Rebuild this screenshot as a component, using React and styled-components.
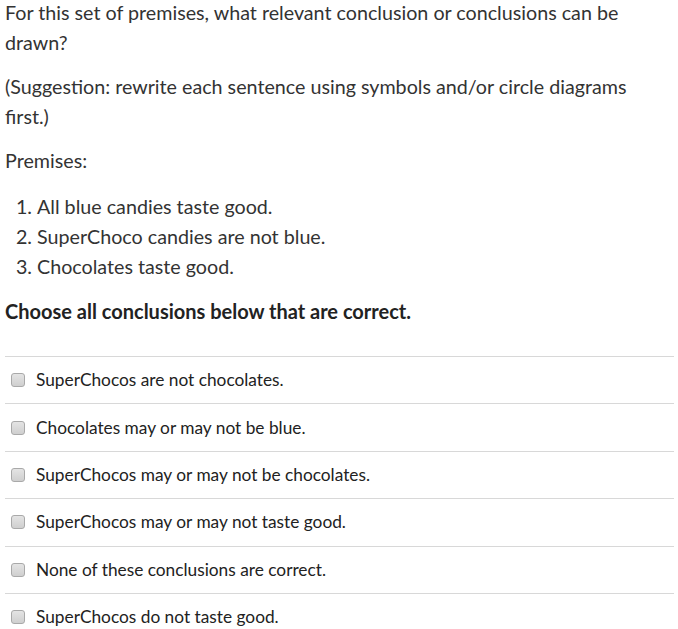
import React from "react";
import styled, { createGlobalStyle } from "styled-components";

const Global = createGlobalStyle`
  body {
    margin: 0;
    background: #fff;
    font-family: Lato, "Open Sans", sans-serif;
    color: #333;
  }
`;

const Page = styled.div`
  width: 678px;
  margin-top: -2px;
  padding: 0 4px 0 5px;
  box-sizing: border-box;
  font-size: 19.7px;
  line-height: 30px;
`;

const Para = styled.p`
  margin: 0 0 14px;
  max-width: 650px;
`;

const List = styled.ol`
  margin: 16px 0 14px;
  padding-left: 32px;
  li::marker {
    content: counter(list-item) ". ";
  }
`;

const Heading = styled.p`
  margin: 0 0 30px;
  font-size: 20px;
  font-weight: 700;
  color: #222;
`;

const Options = styled.div`
  display: flex;
  flex-direction: column;
`;

const Option = styled.label`
  display: flex;
  align-items: center;
  gap: 11px;
  height: 46.4px;
  padding-left: 6px;
  border-top: 1px solid #d8d8d8;
  font-size: 17.3px;
  color: #222;
`;

const Box = styled.span`
  width: 12px;
  height: 12px;
  border: 1px solid #a9a9a9;
  border-radius: 3px;
  background: linear-gradient(#e4e4e4, #cfcfcf);
  flex: none;
`;

const premises = [
  "All blue candies taste good.",
  "SuperChoco candies are not blue.",
  "Chocolates taste good.",
];

const options = [
  "SuperChocos are not chocolates.",
  "Chocolates may or may not be blue.",
  "SuperChocos may or may not be chocolates.",
  "SuperChocos may or may not taste good.",
  "None of these conclusions are correct.",
  "SuperChocos do not taste good.",
];

export default function App() {
  return (
    <Page>
      <Global />
      <Para>
        For this set of premises, what relevant conclusion or conclusions can be
        drawn?
      </Para>
      <Para>
        (Suggestion: rewrite each sentence using symbols and/or circle diagrams
        first.)
      </Para>
      <Para>Premises:</Para>
      <List>
        {premises.map((p) => (
          <li key={p}>{p}</li>
        ))}
      </List>
      <Heading>Choose all conclusions below that are correct.</Heading>
      <Options>
        {options.map((o) => (
          <Option key={o}>
            <Box />
            {o}
          </Option>
        ))}
      </Options>
    </Page>
  );
}
